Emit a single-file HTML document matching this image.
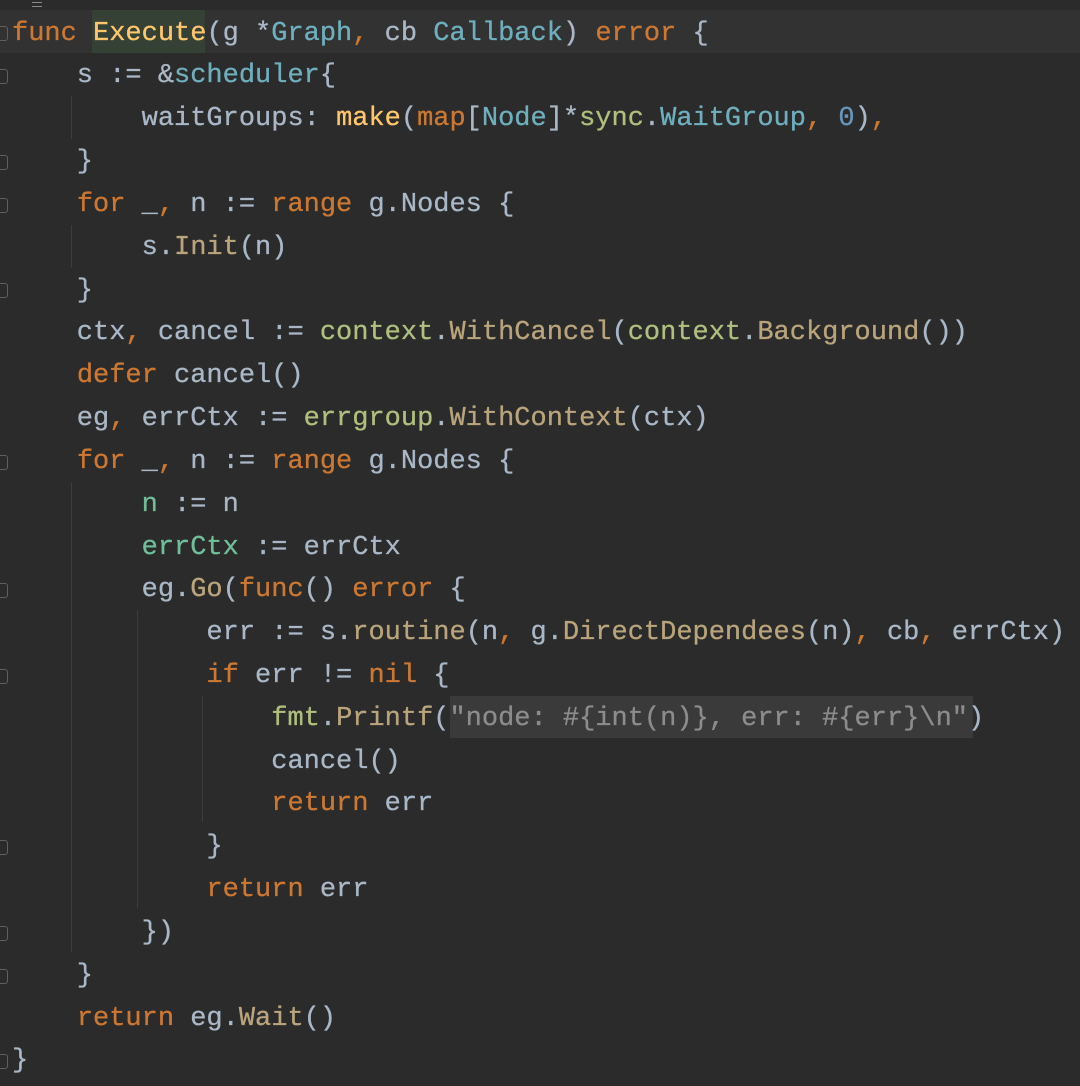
<!DOCTYPE html>
<html><head><meta charset="utf-8"><style>
html,body{margin:0;padding:0;background:#2b2b2b;width:1080px;height:1086px;overflow:hidden;position:relative}
.l{position:absolute;left:12px;height:43px;line-height:43px;font-family:"Liberation Mono",monospace;font-size:27px;color:#a9b7c6;white-space:pre;margin-top:2px;-webkit-text-stroke:0.3px currentColor}
.k{color:#cc7832}.f{color:#ffc66d}.t{color:#6fafbd}.n{color:#6897bb}.p{color:#afbf7e}.m{color:#b9a47c}.v{color:#6fbf9a}.s{color:#8c8c8c}
.g{position:absolute;width:1px;background:#3c3c3c}
.fd{position:absolute;left:0;width:7px;height:13px;border:1px solid #5f5f5f;border-left:none;border-radius:0 3px 3px 0}
</style></head><body>
<div style="position:absolute;left:0;top:10px;width:1080px;height:43px;background:#323232"></div>
<div style="position:absolute;left:92px;top:10px;width:113px;height:43px;background:#344134"></div>
<div style="position:absolute;left:450px;top:696px;width:523px;height:42px;background:#3a3a3a"></div>
<div style="position:absolute;left:32px;top:2px;width:10px;height:1px;background:#8a8a8a"></div>
<div style="position:absolute;left:32px;top:6px;width:10px;height:1px;background:#8a8a8a"></div>
<div class="g" style="left:71px;top:96px;height:43px"></div>
<div class="g" style="left:71px;top:225px;height:43px"></div>
<div class="g" style="left:71px;top:482px;height:470px"></div>
<div class="g" style="left:137px;top:610px;height:298px"></div>
<div class="g" style="left:202px;top:696px;height:126px"></div>
<div class="fd" style="top:26px"></div><div class="fd" style="top:69px"></div><div class="fd" style="top:155px"></div><div class="fd" style="top:198px"></div><div class="fd" style="top:283px"></div><div class="fd" style="top:455px"></div><div class="fd" style="top:583px"></div><div class="fd" style="top:669px"></div><div class="fd" style="top:840px"></div><div class="fd" style="top:926px"></div><div class="fd" style="top:969px"></div><div class="fd" style="top:1054px"></div>
<div class="l" style="top:10.5px"><span class="k">func</span> <span class="f">Execute</span>(g *<span class="t">Graph</span><span class="k">,</span> cb <span class="t">Callback</span>) <span class="k">error</span> {</div>
<div class="l" style="top:53.3px">    s := &amp;<span class="t">scheduler</span>{</div>
<div class="l" style="top:96.2px">        waitGroups: <span class="f">make</span>(<span class="k">map</span>[<span class="t">Node</span>]*<span class="p">sync</span>.<span class="t">WaitGroup</span><span class="k">,</span> <span class="n">0</span>)<span class="k">,</span></div>
<div class="l" style="top:139px">    }</div>
<div class="l" style="top:181.8px">    <span class="k">for</span> _<span class="k">,</span> n := <span class="k">range</span> g.Nodes {</div>
<div class="l" style="top:224.7px">        s.<span class="m">Init</span>(n)</div>
<div class="l" style="top:267.5px">    }</div>
<div class="l" style="top:310.3px">    ctx<span class="k">,</span> cancel := <span class="p">context</span>.<span class="m">WithCancel</span>(<span class="p">context</span>.<span class="m">Background</span>())</div>
<div class="l" style="top:353.1px">    <span class="k">defer</span> cancel()</div>
<div class="l" style="top:396px">    eg<span class="k">,</span> errCtx := <span class="p">errgroup</span>.<span class="m">WithContext</span>(ctx)</div>
<div class="l" style="top:438.8px">    <span class="k">for</span> _<span class="k">,</span> n := <span class="k">range</span> g.Nodes {</div>
<div class="l" style="top:481.6px">        <span class="v">n</span> := n</div>
<div class="l" style="top:524.5px">        <span class="v">errCtx</span> := errCtx</div>
<div class="l" style="top:567.3px">        eg.<span class="m">Go</span>(<span class="k">func</span>() <span class="k">error</span> {</div>
<div class="l" style="top:610.1px">            err := s.<span class="m">routine</span>(n<span class="k">,</span> g.<span class="m">DirectDependees</span>(n)<span class="k">,</span> cb<span class="k">,</span> errCtx)</div>
<div class="l" style="top:653px">            <span class="k">if</span> err != <span class="k">nil</span> {</div>
<div class="l" style="top:695.8px">                <span class="p">fmt</span>.<span class="m">Printf</span>(<span class="s">"node: #{int(n)}, err: #{err}\n"</span>)</div>
<div class="l" style="top:738.6px">                cancel()</div>
<div class="l" style="top:781.4px">                <span class="k">return</span> err</div>
<div class="l" style="top:824.3px">            }</div>
<div class="l" style="top:867.1px">            <span class="k">return</span> err</div>
<div class="l" style="top:910px">        })</div>
<div class="l" style="top:952.8px">    }</div>
<div class="l" style="top:995.6px">    <span class="k">return</span> eg.<span class="m">Wait</span>()</div>
<div class="l" style="top:1038.4px">}</div>
</body></html>
